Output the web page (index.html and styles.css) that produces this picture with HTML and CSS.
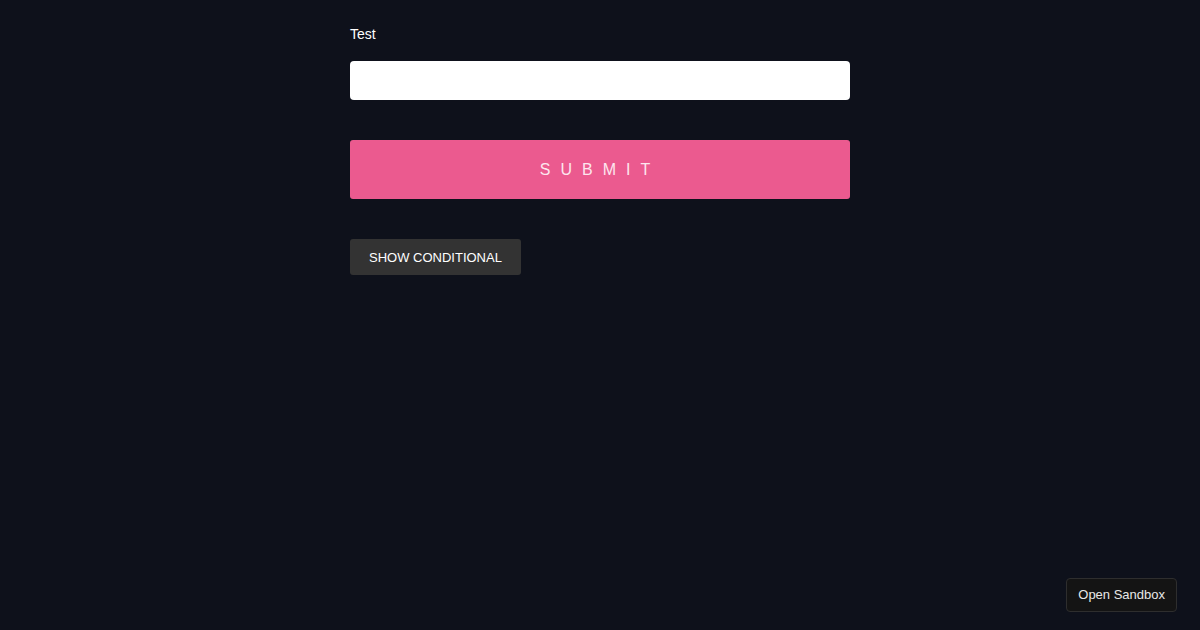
FILE: index.html
```html
<!DOCTYPE html>
<html>
<head>
<meta charset="utf-8">
<link rel="stylesheet" href="styles.css">
</head>
<body>
<main class="form">
  <label class="label" for="test">Test</label>
  <input id="test" class="input" type="text">
  <button class="submit">SUBMIT</button>
  <button class="toggle">SHOW CONDITIONAL</button>
</main>
<a class="sandbox">Open Sandbox</a>
</body>
</html>
```
FILE: styles.css
```css
html, body {
  margin: 0;
  height: 100%;
  background: #0e111b;
  font-family: "Liberation Sans", Arial, sans-serif;
  color: #fff;
}
.form {
  width: 500px;
  margin: 0 auto;
  padding-top: 26px;
  display: flex;
  flex-direction: column;
  align-items: flex-start;
}
.label {
  font-size: 14px;
  line-height: 16px;
  color: #fff;
}
.input {
  box-sizing: border-box;
  width: 100%;
  height: 39px;
  margin-top: 19px;
  border: none;
  border-radius: 4px;
  background: #fff;
  padding: 0 10px;
  font-size: 14px;
}
.submit {
  width: 100%;
  height: 59px;
  margin-top: 40px;
  border: none;
  border-radius: 3px;
  background: #eb5a8f;
  color: #fde6ee;
  font-family: "Liberation Sans", Arial, sans-serif;
  font-size: 16px;
  letter-spacing: 10px;
}
.toggle {
  margin-top: 40px;
  height: 36px;
  padding: 0 19px;
  border: none;
  border-radius: 3px;
  background: #333333;
  color: #fff;
  font-family: "Liberation Sans", Arial, sans-serif;
  font-size: 13px;
}
.sandbox {
  position: fixed;
  right: 23px;
  bottom: 18px;
  box-sizing: border-box;
  height: 34px;
  padding: 0 11px 1px;
  display: flex;
  align-items: center;
  background: #141414;
  border: 1px solid #2e2e2e;
  border-radius: 4px;
  color: #e8e8e8;
  font-family: "Liberation Sans", Arial, sans-serif;
  font-size: 13px;
}
```
